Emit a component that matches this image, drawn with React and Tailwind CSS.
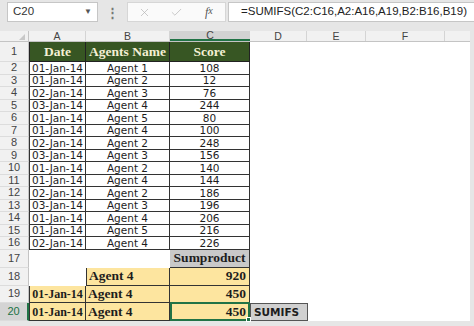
import { X, Check } from "lucide-react";

const data = [
  ["01-Jan-14", "Agent 1", 108],
  ["01-Jan-14", "Agent 2", 12],
  ["02-Jan-14", "Agent 3", 76],
  ["03-Jan-14", "Agent 4", 244],
  ["01-Jan-14", "Agent 5", 80],
  ["01-Jan-14", "Agent 4", 100],
  ["02-Jan-14", "Agent 2", 248],
  ["03-Jan-14", "Agent 3", 156],
  ["01-Jan-14", "Agent 2", 140],
  ["01-Jan-14", "Agent 4", 144],
  ["02-Jan-14", "Agent 2", 186],
  ["03-Jan-14", "Agent 3", 196],
  ["01-Jan-14", "Agent 4", 206],
  ["01-Jan-14", "Agent 5", 216],
  ["02-Jan-14", "Agent 4", 226],
];

const serif = "font-['Liberation_Serif',serif] whitespace-nowrap leading-none";

// row number cell on the left
const RowNum = ({ n, active }) => (
  <div
    className={`w-[29px] shrink-0 flex items-center justify-center text-[11px] leading-none border-b border-[#dcdcdc] font-['Liberation_Sans',sans-serif] font-normal ${
      active
        ? "bg-[#d4d4d4] text-[#217346] border-r-2 border-r-[#217346]"
        : "bg-[#f1f1f1] text-[#444] border-r border-r-[#c4c4c4]"
    }`}
  >
    {n}
  </div>
);

export default function App() {
  return (
    <div className="w-[474px] h-[326px] bg-[#e6e6e6] overflow-hidden font-['Liberation_Sans',sans-serif]">
      {/* Formula bar */}
      <div className="flex h-[23px] pt-[2px] pl-[7px]">
        <div className="w-[91px] h-[20px] bg-white border border-[#c6c6c6] flex items-center justify-between pl-[5px] pr-[5px] text-[11.5px] text-[#333]">
          <span>C20</span>
          <span className="text-[8px] text-[#555]">▼</span>
        </div>
        <div className="w-[29px] flex items-center justify-center text-[#777] text-[13px] font-bold">
          ⋮
        </div>
        <div className="w-[99px] h-[20px] bg-[#fafafa] border border-[#d6d6d6] flex items-center">
          <div className="w-[33px] flex justify-center">
            <X size={13} strokeWidth={1.3} color="#b5b5b5" />
          </div>
          <div className="w-[33px] flex justify-center">
            <Check size={13} strokeWidth={1.3} color="#b5b5b5" />
          </div>
          <div className="w-[33px] flex justify-center text-[12px] italic text-[#555] font-['Liberation_Serif',serif]">
            f<span className="text-[10px]">x</span>
          </div>
        </div>
        <div className="ml-[2px] flex-1 h-[20px] bg-white border border-[#c6c6c6] border-r-0 flex items-center pl-[12px] text-[11.5px] text-[#222]">
          =SUMIFS(C2:C16,A2:A16,A19,B2:B16,B19)
        </div>
      </div>

      <div className="h-[8px]" />

      {/* Sheet */}
      <div className="w-[470px] bg-white">
        {/* column headers */}
        <div className="flex h-[11px] bg-[#f1f1f1] text-[10.5px] text-[#444] leading-none border-b border-[#c4c4c4]">
          <div className="w-[29px] shrink-0 border-r border-[#c4c4c4] relative">
            <div className="absolute right-[3px] bottom-[1px] w-0 h-0 border-l-[6px] border-l-transparent border-b-[6px] border-b-[#c8c8c8]" />
          </div>
          <div className="w-[57px] flex items-center justify-center border-r border-[#d4d4d4]">A</div>
          <div className="w-[84px] flex items-center justify-center border-r border-[#d4d4d4]">B</div>
          <div className="w-[80px] flex items-center justify-center bg-[#d2d2d2] border-b-2 border-[#217346]">C</div>
          <div className="w-[57px] flex items-center justify-center border-r border-[#d4d4d4]">D</div>
          <div className="w-[59px] flex items-center justify-center border-r border-[#d4d4d4]">E</div>
          <div className="w-[79px] flex items-center justify-center border-r border-[#d4d4d4]">F</div>
          <div className="flex-1" />
        </div>

        {/* row 1 */}
        <div className={`flex h-[20px] text-[13.5px] font-bold ${serif}`}>
          <RowNum n={1} />
          <div className="w-[57px] bg-[#375623] text-[#f4f0d4] flex items-center justify-center border-l border-r border-b border-[#222]">
            Date
          </div>
          <div className="w-[84px] bg-[#375623] text-[#f4f0d4] flex items-center justify-center border-r border-b border-[#222]">
            Agents Name
          </div>
          <div className="w-[80px] bg-[#375623] text-[#f4f0d4] flex items-center justify-center border-r border-b border-[#222]">
            Score
          </div>
          <div className="flex-1" />
        </div>

        {/* rows 2-16 */}
        {data.map((r, i) => (
          <div key={i} className="flex h-[12.5px] text-[10.5px] text-[#1d1d1d] leading-none font-['DejaVu_Sans',sans-serif] whitespace-nowrap">
            <RowNum n={i + 2} />
            <div className="w-[57px] flex items-center justify-center border-l border-r border-b border-[#333]">{r[0]}</div>
            <div className="w-[84px] flex items-center justify-center border-r border-b border-[#333]">{r[1]}</div>
            <div className="w-[80px] flex items-center justify-center border-r border-b border-[#333]">{r[2]}</div>
            <div className="flex-1" />
          </div>
        ))}

        {/* row 17 */}
        <div className={`flex h-[18px] text-[13.5px] font-bold text-[#1d1d1d] ${serif}`}>
          <RowNum n={17} />
          <div className="w-[141px]" />
          <div className="w-[80px] bg-[#c9c9c9] flex items-center justify-center border-r border-b border-[#333]">
            Sumproduct
          </div>
          <div className="flex-1" />
        </div>

        {/* row 18 */}
        <div className={`flex h-[18px] text-[13.5px] font-bold text-[#1d1d1d] ${serif}`}>
          <RowNum n={18} />
          <div className="w-[57px]" />
          <div className="w-[84px] bg-[#fde59f] flex items-center pl-[2px] border-l border-r border-b border-[#333]">
            Agent 4
          </div>
          <div className="w-[80px] bg-[#fde59f] flex items-center justify-end pr-[3px] border-r border-b border-[#333]">
            920
          </div>
          <div className="flex-1" />
        </div>

        {/* row 19 */}
        <div className={`flex h-[17.5px] text-[13.5px] font-bold text-[#1d1d1d] ${serif}`}>
          <RowNum n={19} />
          <div className="w-[57px] bg-[#fde59f] flex items-center justify-center border-l border-r border-b border-[#333] text-[12px]">
            01-Jan-14
          </div>
          <div className="w-[84px] bg-[#fde59f] flex items-center pl-[2px] border-r border-b border-[#333]">
            Agent 4
          </div>
          <div className="w-[80px] bg-[#fde59f] flex items-center justify-end pr-[3px] border-r border-b border-[#333]">
            450
          </div>
          <div className="flex-1" />
        </div>

        {/* row 20 */}
        <div className={`flex h-[18px] text-[13.5px] font-bold text-[#1d1d1d] ${serif}`}>
          <RowNum n={20} active />
          <div className="w-[57px] bg-[#fde59f] flex items-center justify-center border-l border-r border-b border-[#333] text-[12px]">
            01-Jan-14
          </div>
          <div className="w-[84px] bg-[#fde59f] flex items-center pl-[2px] border-r border-b border-[#333]">
            Agent 4
          </div>
          <div className="w-[80px] relative bg-[#fde59f] flex items-center justify-end pr-[2px] border-2 border-[#217346] -mt-[1px]">
            450
            <div className="absolute -right-[3px] -bottom-[3px] w-[5px] h-[5px] bg-[#217346] border border-white" />
          </div>
          <div className="w-[58px] bg-[#d0d0d0] flex items-center pl-[3px] border border-[#555] text-[10.5px] font-['DejaVu_Sans',sans-serif]">
            SUMIFS
          </div>
          <div className="flex-1" />
        </div>
      </div>
    </div>
  );
}
